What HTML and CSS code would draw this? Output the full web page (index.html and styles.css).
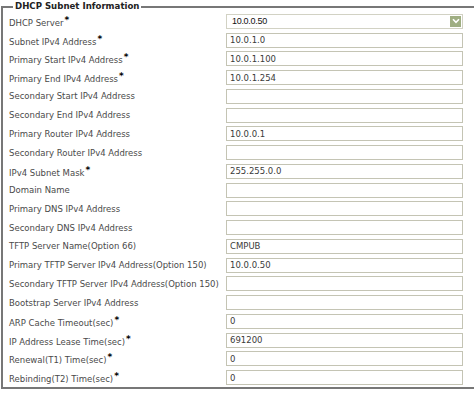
FILE: index.html
```html
<!DOCTYPE html>
<html lang="en">
<head>
    <meta charset="UTF-8">
    <title>DHCP Subnet Information</title>
    <link rel="stylesheet" href="styles.css">
</head>
<body>

<!-- DHCP subnet settings -->
<fieldset class="subnet">
    <legend>DHCP Subnet Information</legend>
    <div class="rows">
        <label>DHCP Server<span class="req">*</span></label>
        <div class="select">
            <span class="select-value">10.0.0.50</span>
            <span class="select-arrow">
                <svg width="8" height="6" viewBox="0 0 8 6"><path d="M1 1.2 L4 4.4 L7 1.2" fill="none" stroke="#fff" stroke-width="1.6"/></svg>
            </span>
        </div>

        <label>Subnet IPv4 Address<span class="req">*</span></label>
        <input type="text" value="10.0.1.0">

        <label>Primary Start IPv4 Address<span class="req">*</span></label>
        <input type="text" value="10.0.1.100">

        <label>Primary End IPv4 Address<span class="req">*</span></label>
        <input type="text" value="10.0.1.254">

        <label>Secondary Start IPv4 Address</label>
        <input type="text" value="">

        <label>Secondary End IPv4 Address</label>
        <input type="text" value="">

        <label>Primary Router IPv4 Address</label>
        <input type="text" value="10.0.0.1">

        <label>Secondary Router IPv4 Address</label>
        <input type="text" value="">

        <label>IPv4 Subnet Mask<span class="req">*</span></label>
        <input type="text" value="255.255.0.0">

        <label>Domain Name</label>
        <input type="text" value="">

        <label>Primary DNS IPv4 Address</label>
        <input type="text" value="">

        <label>Secondary DNS IPv4 Address</label>
        <input type="text" value="">

        <label>TFTP Server Name(Option 66)</label>
        <input type="text" value="CMPUB">

        <label>Primary TFTP Server IPv4 Address(Option 150)</label>
        <input type="text" value="10.0.0.50">

        <label>Secondary TFTP Server IPv4 Address(Option 150)</label>
        <input type="text" value="">

        <label>Bootstrap Server IPv4 Address</label>
        <input type="text" value="">

        <label>ARP Cache Timeout(sec)<span class="req">*</span></label>
        <input type="text" value="0">

        <label>IP Address Lease Time(sec)<span class="req">*</span></label>
        <input type="text" value="691200">

        <label>Renewal(T1) Time(sec)<span class="req">*</span></label>
        <input type="text" value="0">

        <label>Rebinding(T2) Time(sec)<span class="req">*</span></label>
        <input type="text" value="0">
    </div>
</fieldset>

</body>
</html>
```

FILE: styles.css
```css
body {
    margin: 0;
    background-color: #fff;
    font-family: "DejaVu Sans", Verdana, sans-serif;
    font-size: 8.5px;
    color: #4a4a4a;
    overflow: hidden;
}

/* Outer group box */
.subnet {
    margin: 0 0 0 1px;
    padding: 0 6px 0 6px;
    width: 480px;
    border: 2px solid #777;
    min-width: 0;
}

.subnet legend {
    padding: 0 2px;
    margin-left: 4px;
    font-weight: bold;
    font-size: 8.6px;
    line-height: 13px;
    color: #222;
}

/* Label / field grid */
.rows {
    display: grid;
    grid-template-columns: 217px 237px;
    grid-auto-rows: 18.76px;
    align-items: center;
    margin-top: -1px;
}

.rows label {
    white-space: nowrap;
}

.req {
    color: #000;
    font-weight: bold;
    font-size: 9px;
    vertical-align: 3px;
    margin-left: 1px;
}

.rows input {
    box-sizing: border-box;
    height: 15px;
    width: 237px;
    margin: 0;
    padding: 0 3px;
    border: 1px solid #c4c4b4;
    font-family: "DejaVu Sans", Verdana, sans-serif;
    font-size: 8.5px;
    color: #3a3a3a;
    background: #fff;
    outline: none;
}

/* Fake select for the server list */
.select {
    box-sizing: border-box;
    height: 15px;
    width: 237px;
    border: 1px solid #d2d2c4;
    display: flex;
    align-items: center;
    justify-content: space-between;
    padding: 0 1px 0 5px;
}

.select-value {
    font-family: "Liberation Sans", Arial, sans-serif;
    font-size: 9px;
    color: #111;
    letter-spacing: -0.3px;
}

.select-arrow {
    width: 11px;
    height: 11px;
    background: #9fae82;
    display: flex;
    align-items: center;
    justify-content: center;
}
```
